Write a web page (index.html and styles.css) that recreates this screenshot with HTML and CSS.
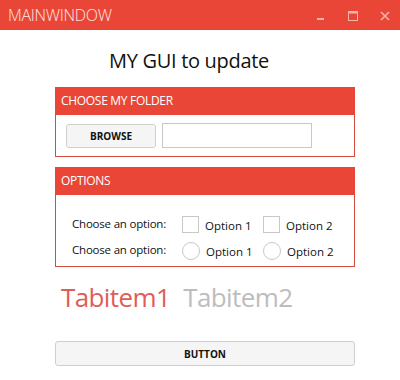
FILE: index.html
```html
<!DOCTYPE html>
<html>
<head>
<meta charset="utf-8">
<link rel="stylesheet" href="styles.css">
</head>
<body>
<div class="window">
  <div class="titlebar">
    <span class="wintitle">MAINWINDOW</span>
    <div class="controls">
      <svg class="ctl" width="12" height="12" viewBox="0 0 12 12"><rect x="2" y="8" width="7" height="2" fill="#f6b3aa"/></svg>
      <svg class="ctl" width="12" height="12" viewBox="0 0 12 12"><rect x="1.5" y="1.5" width="9" height="9" fill="none" stroke="#f6b3aa" stroke-width="1"/><rect x="1.5" y="1.5" width="9" height="2" fill="#f6b3aa"/></svg>
      <svg class="ctl" width="12" height="12" viewBox="0 0 12 12"><path d="M2 2L10 10M10 2L2 10" stroke="#f6b3aa" stroke-width="1.6"/></svg>
    </div>
  </div>
  <div class="content">
    <h1 class="heading">MY GUI to update</h1>
    <div class="group">
      <div class="group-header">CHOOSE MY FOLDER</div>
      <div class="group-body folder-body">
        <button class="btn browse">BROWSE</button>
        <div class="textbox"></div>
      </div>
    </div>
    <div class="group options">
      <div class="group-header">OPTIONS</div>
      <div class="group-body options-body">
        <div class="opt-row">
          <span class="opt-label">Choose an option:</span>
          <span class="opt"><span class="check"></span>Option 1</span>
          <span class="opt"><span class="check"></span>Option 2</span>
        </div>
        <div class="opt-row">
          <span class="opt-label">Choose an option:</span>
          <span class="opt"><span class="radio"></span>Option 1</span>
          <span class="opt"><span class="radio"></span>Option 2</span>
        </div>
      </div>
    </div>
    <div class="tabs">
      <span class="tab active">Tabitem1</span>
      <span class="tab">Tabitem2</span>
    </div>
    <button class="btn wide">BUTTON</button>
  </div>
</div>
</body>
</html>
```
FILE: styles.css
```css
html, body {
  margin: 0;
  padding: 0;
  background: #ffffff;
}
body {
  font-family: "Open Sans", "Noto Sans", sans-serif;
  width: 400px;
  height: 380px;
  overflow: hidden;
}
.titlebar {
  height: 30px;
  background: #e94637;
  display: flex;
  align-items: center;
  justify-content: space-between;
  padding-left: 8px;
}
.wintitle {
  color: #fde6e3;
  font-size: 16px;
  font-weight: 300;
  letter-spacing: -0.3px;
}
.controls {
  display: flex;
  gap: 20px;
  padding-right: 9px;
  padding-top: 2px;
}
.ctl { display: block; }
.content {
  padding: 0 45px 0 55px;
}
.heading {
  margin: 18px 0 0 0;
  padding-left: 54px;
  font-size: 20px;
  font-weight: 400;
  color: #111;
  line-height: 26px;
  height: 27px;
  letter-spacing: -0.3px;
}
.group {
  margin-top: 12px;
  border: 1px solid #d44a3e;
  border-top: none;
}
.group-header {
  background: #e94637;
  color: #ffffff;
  font-size: 12px;
  height: 28px;
  line-height: 28px;
  padding-left: 6px;
  margin: 0 -1px;
  letter-spacing: -0.3px;
}
.folder-body {
  display: flex;
  align-items: center;
  gap: 6px;
  padding: 0 10px;
  height: 41px;
}
.btn {
  font-family: "Open Sans", sans-serif;
  font-weight: 700;
  font-size: 10px;
  color: #111;
  background: #f5f5f5;
  border: 1px solid #cfcfcf;
  border-radius: 3px;
  padding: 0;
}
.browse {
  width: 90px;
  height: 24px;
}
.textbox {
  width: 148px;
  height: 23px;
  border: 1px solid #c8c8c8;
}
.options { margin-top: 10px; }
.options-body {
  padding: 20px 0 5px 16px;
  display: flex;
  flex-direction: column;
  gap: 6px;
}
.opt-row {
  display: flex;
  align-items: center;
  height: 20px;
  font-size: 11.5px;
  color: #111;
}
.opt-label {
  width: 110px;
  letter-spacing: -0.2px;
  margin-top: -4px;
}
.opt {
  display: flex;
  align-items: center;
  width: 81px;
}
.check {
  width: 17px;
  height: 17px;
  border: 1px solid #c8c8c8;
  margin-right: 6px;
  margin-top: -2px;
  box-sizing: border-box;
}
.radio {
  width: 18px;
  height: 18px;
  border: 1px solid #c8c8c8;
  border-radius: 50%;
  margin-right: 6px;
  box-sizing: border-box;
}
.tabs {
  margin-top: 14px;
  padding-left: 6px;
  display: flex;
  gap: 13px;
  font-size: 26px;
  line-height: 32px;
  letter-spacing: -0.6px;
}
.tab { color: #bdbdbd; }
.tab.active { color: #e05d57; }
.wide {
  display: block;
  margin-top: 28px;
  width: 300px;
  height: 25px;
}
```
